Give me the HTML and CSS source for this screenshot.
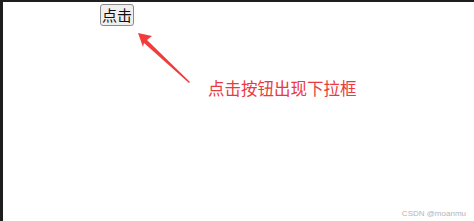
FILE: index.html
```html
<!DOCTYPE html>
<html lang="zh-CN">
<head>
    <meta charset="UTF-8">
    <meta name="viewport" content="width=device-width, initial-scale=1.0">
    <title>点击</title>
    <link rel="stylesheet" href="styles.css">
</head>
<body>
    <div class="screen">
        <div class="toolbar">
            <button class="btn">点击</button>
        </div>

        <!-- 标注 -->
        <svg class="arrow" width="80" height="70" viewBox="0 0 80 70">
            <polygon points="8,13 22,16 17,20 60,62 59,63 14,23 13,27" fill="#f23c3c"/>
        </svg>
        <div class="note">点击按钮出现下拉框</div>

        <div class="mark">CSDN @moanmu</div>
    </div>
</body>
</html>
```

FILE: styles.css
```css
body {
    margin: 0;
    background: #fff;
    font-family: "Noto Sans CJK SC", "Liberation Sans", sans-serif;
}

.screen {
    position: relative;
    height: 219px;
    border-top: 2px solid #1e1e1e;
    border-left: 3px solid #1e1e1e;
}

.toolbar {
    display: flex;
    padding: 2px 0 0 97px;
}

.btn {
    font-family: "Noto Sans CJK SC", sans-serif;
    font-size: 15px;
    line-height: 18px;
    padding: 1px 1px;
    color: #111;
    background: #efefef;
    border: 1px solid #8a8a8a;
    border-radius: 3px;
}

.arrow {
    position: absolute;
    left: 127px;
    top: 18px;
}

.note {
    position: absolute;
    left: 205px;
    top: 74px;
    font-size: 16.5px;
    color: #ea3a40;
}

.mark {
    position: absolute;
    right: 8px;
    bottom: 3px;
    font-family: "Liberation Sans", sans-serif;
    font-size: 8px;
    color: #b5b5b5;
}
```
